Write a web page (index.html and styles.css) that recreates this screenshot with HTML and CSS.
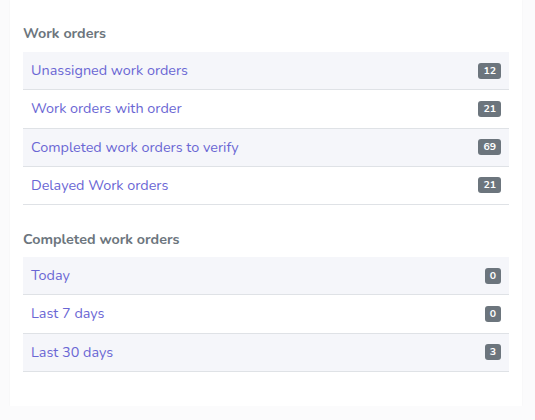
FILE: index.html
```html
<!DOCTYPE html>
<html>
<head>
<meta charset="utf-8">
<link rel="stylesheet" href="styles.css">
</head>
<body>
<div class="card">
  <section class="section">
    <h6 class="section-title">Work orders</h6>
    <ul class="list">
      <li class="row"><a class="link" href="#">Unassigned work orders</a><span class="badge">12</span></li>
      <li class="row"><a class="link" href="#">Work orders with order</a><span class="badge">21</span></li>
      <li class="row"><a class="link" href="#">Completed work orders to verify</a><span class="badge">69</span></li>
      <li class="row"><a class="link" href="#">Delayed Work orders</a><span class="badge">21</span></li>
    </ul>
  </section>
  <section class="section section-second">
    <h6 class="section-title">Completed work orders</h6>
    <ul class="list">
      <li class="row"><a class="link" href="#">Today</a><span class="badge">0</span></li>
      <li class="row"><a class="link" href="#">Last 7 days</a><span class="badge">0</span></li>
      <li class="row"><a class="link" href="#">Last 30 days</a><span class="badge">3</span></li>
    </ul>
  </section>
</div>
</body>
</html>
```
FILE: styles.css
```css
html, body {
  margin: 0;
  padding: 0;
  background: #fbfbfc;
  font-family: "Nunito", "Lato", "Open Sans", sans-serif;
}
.card {
  margin: 0 13px 0 10px;
  height: 406px;
  box-sizing: border-box;
  background: #ffffff;
  box-shadow: 0 0 2px rgba(0,0,0,0.04);
  padding: 23px 13px 0 13px;
}
.section {
  margin-bottom: 24px;
}
.section-title {
  margin: 0 0 7px 0;
  font-size: 14.3px;
  line-height: 22px;
  font-weight: 700;
  color: #6c757d;
}
.section-second .section-title {
  margin-bottom: 6px;
}
.list {
  list-style: none;
  margin: 0;
  padding: 0;
}
.row {
  display: flex;
  align-items: center;
  justify-content: space-between;
  padding: 8px 8px;
  line-height: 21.25px;
  border-bottom: 1px solid #dfe2e6;
  font-size: 14.4px;
}
.row:nth-child(odd) {
  background: #f5f6fa;
}
.link {
  color: #6a66d4;
  text-decoration: none;
}
.badge {
  display: inline-block;
  background: #6c757d;
  color: #ffffff;
  font-size: 10.5px;
  font-weight: 700;
  line-height: 16px;
  padding: 0 5px;
  border-radius: 3px;
  min-width: 6px;
  text-align: center;
}
```
